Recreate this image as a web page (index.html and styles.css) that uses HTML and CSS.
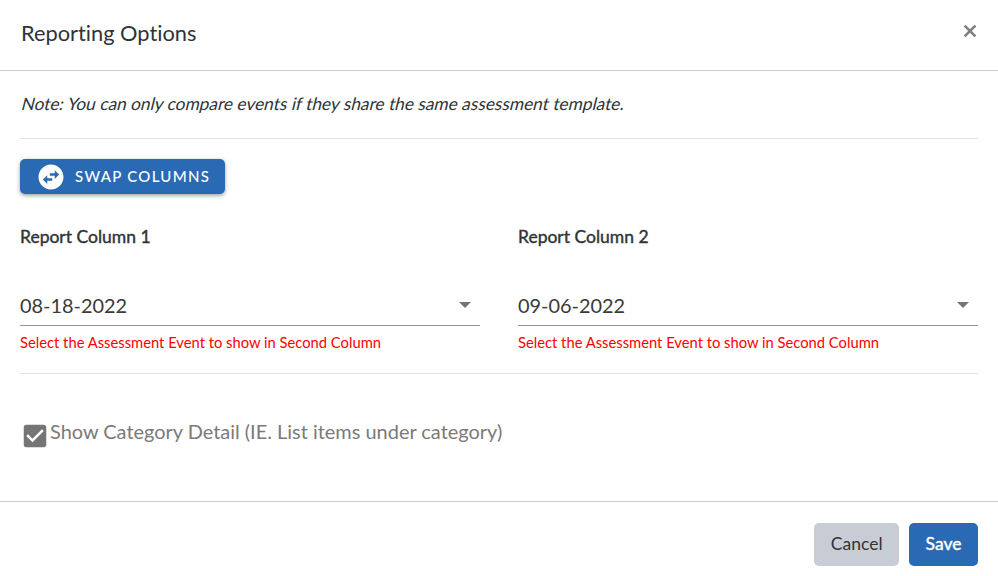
FILE: index.html
```
<!doctype html>
<html lang="en">
<head>

<meta charset="utf-8">

<title>Reporting Options</title>

<link rel="stylesheet" href="styles.css">

</head>
<body>

<div class="modal">
	<div class="modal-header">
		<h4 class="modal-title">Reporting Options</h4>
		<button type="button" class="close" aria-label="Close">
			<svg width="14" height="14" viewBox="0 0 14 14"><path d="M1.6 1.6 12.4 12.4M12.4 1.6 1.6 12.4"/></svg>
		</button>
	</div>

	<div class="modal-body">
		<p class="note">Note: You can only compare events if they share the same assessment template.</p>

		<hr>

		<button type="button" class="swap">
			<svg width="30" height="30" viewBox="0 0 24 24"><path d="M22 12c0-5.520-4.480-10-10-10S2 6.480 2 12s4.480 10 10 10 10-4.480 10-10zm-7-5.500l3.500 3.500-3.500 3.500V11h-4V9h4V6.500zm-6 11L5.500 14 9 10.500V13h4v2H9v2.500z"/></svg>
			<span>Swap Columns</span>
		</button>

		<div class="columns">
			<div class="column">
				<div class="column-title">Report Column 1</div>
				<div class="select">
					<span>08-18-2022</span>
					<i class="arrow"></i>
				</div>
				<div class="hint">Select the Assessment Event to show in Second Column</div>
			</div>

			<div class="column">
				<div class="column-title">Report Column 2</div>
				<div class="select">
					<span>09-06-2022</span>
					<i class="arrow"></i>
				</div>
				<div class="hint">Select the Assessment Event to show in Second Column</div>
			</div>
		</div>

		<hr>

		<div class="detail">
			<svg width="30" height="30" viewBox="0 0 24 24"><path d="M19 3H5c-1.110 0-2 .9-2 2v14c0 1.100.89 2 2 2h14c1.110 0 2-.9 2-2V5c0-1.100-.89-2-2-2zm-9 14l-5-5 1.410-1.410L10 14.170l7.590-7.590L19 8l-9 9z"/></svg>
			<span>Show Category Detail (IE. List items under category)</span>
		</div>
	</div>

	<div class="modal-footer">
		<button type="button" class="btn">Cancel</button>
		<button type="button" class="btn btn--primary">Save</button>
	</div>
</div>

</body>
</html>
```
FILE: styles.css
```
* {
	box-sizing: border-box;
}

body {
	margin: 0;
	background: #fff;
	color: #2f3438;
	font-family: Lato, "Liberation Sans", sans-serif;
	font-size: 17.5px;
	line-height: 26px;
	font-variant-ligatures: none;
}

button {
	border: 0;
	font-family: inherit;
}

hr {
	height: 1px;
	margin: 0;
	border: 0;
	background: #e2e3e4;
}

.modal {
	display: flex;
	flex-direction: column;
	height: 576px;
}

.modal-header {
	display: flex;
	justify-content: space-between;
	height: 71px;
	padding: 20px;
	border-bottom: 1px solid #c8ced3;
}

.modal-title {
	margin: -1px 0 0 1px;
	font-size: 21.8px;
	font-weight: 400;
	line-height: 27px;
}

.close {
	display: flex;
	width: 14px;
	height: 14px;
	margin: 4px 1px 0 0;
	padding: 0;
	background: none;
}
.close path {
	stroke: #7f7f7f;
	stroke-width: 2.6;
}

.modal-body {
	flex: 1;
	padding: 20px;
}

.note {
	width: max-content;
	margin: 0 0 21px 2px;
	font-size: 17.3px;
	transform: skewX(-14deg);
}

.swap {
	display: flex;
	align-items: center;
	height: 35px;
	margin: 20px 0 30px;
	padding: 0 15px 0 16px;
	border-radius: 5px;
	background: #2a6ab4;
	box-shadow: 0 2px 4px -1px rgba(0, 0, 0, 0.3), 0 1px 5px rgba(0, 0, 0, 0.2);
	color: #fff;
	font-size: 15px;
	font-weight: 500;
	letter-spacing: 1.3px;
	text-transform: uppercase;
}
.swap svg {
	margin-right: 9px;
	fill: #fff;
}
.swap span {
	padding-bottom: 1px;
}

.columns {
	display: flex;
	gap: 38px;
	margin-bottom: 18px;
}

.column {
	flex: 1;
}

.column-title {
	-webkit-text-stroke: 0.4px #2f3438;
}

.select {
	display: flex;
	align-items: center;
	justify-content: space-between;
	height: 39px;
	margin-top: 37px;
	padding: 0 9px 2px 0;
	border-bottom: 1px solid #949494;
	color: #3a3a3a;
	font-size: 19.9px;
}

.arrow {
	border: 6px solid transparent;
	border-top-color: #757575;
	border-bottom: 0;
}

.hint {
	margin-top: 3px;
	color: #f00;
	font-size: 14.75px;
}

.detail {
	display: flex;
	margin-top: 44px;
	color: #7a7a7a;
	font-size: 19.95px;
}
.detail svg {
	margin: 3px 0 0;
	fill: #757575;
}

.modal-footer {
	display: flex;
	justify-content: flex-end;
	gap: 10px;
	height: 75px;
	padding: 21px 20px 0;
	border-top: 1px solid #c8ced3;
}

.btn {
	height: 43px;
	padding: 0 16.5px 2px;
	border-radius: 5px;
	background: #c8ccd4;
	color: #2f3438;
	font-size: 17.5px;
}

.btn--primary {
	background: #2a6ab4;
	color: #fff;
	-webkit-text-stroke: 0.4px #fff;
}
```
